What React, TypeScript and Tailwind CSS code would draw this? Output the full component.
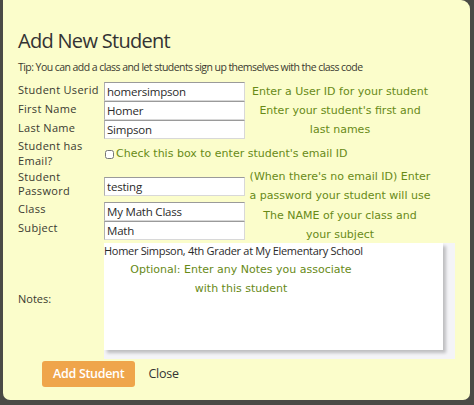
import { useState } from 'react';

const labelCls =
  "font-['Open_Sans',sans-serif] text-[11px] tracking-[0.3px] text-[#3a3a30] leading-[14px]";
const hintCls =
  "font-['DejaVu_Sans',sans-serif] text-[11px] text-[#688a17] leading-[19px] text-center";
const inputCls =
  "block w-[141px] h-[19px] bg-white border border-t-[#9a9a9a] border-l-[#b0b0b0] border-r-[#d8d8d8] border-b-[#d8d8d8] px-[2px] font-['Open_Sans',sans-serif] text-[11.5px] tracking-[-0.2px] text-[#2a2a2a] outline-none";

export function AddStudentDialog() {
  const [userid, setUserid] = useState('homersimpson');
  const [first, setFirst] = useState('Homer');
  const [last, setLast] = useState('Simpson');
  const [hasEmail, setHasEmail] = useState(false);
  const [password, setPassword] = useState('testing');
  const [klass, setKlass] = useState('My Math Class');
  const [subject, setSubject] = useState('Math');

  return (
    <div className="w-[474px] h-[405px] bg-[#4a4a45] overflow-hidden">
      <div className="ml-[3px] w-[467px] h-[400px] bg-[#fbfdcb] rounded-tr-[9px] rounded-br-[7px] rounded-bl-[7px] pl-[15px] pt-[27px]">
        <h1 className="font-['Open_Sans',sans-serif] text-[20px] leading-[28px] tracking-[-0.7px] text-[#333]">
          Add New Student
        </h1>
        <p className="mt-[4px] font-['Open_Sans',sans-serif] text-[10.5px] tracking-[-0.55px] leading-[16px] text-[#3a3a30]">
          Tip: You can add a class and let students sign up themselves with the class code
        </p>

        <div className="mt-[7px] grid grid-cols-[86px_144px_184px] grid-rows-[19px_19px_19px_33px_30px_19px_19px]">
          {/* userid */}
          <div className={`${labelCls} pt-[1px]`}>Student Userid</div>
          <input className={inputCls} value={userid} onChange={(e) => setUserid(e.target.value)} />
          <div className={hintCls}>Enter a User ID for your student</div>

          {/* names */}
          <div className={`${labelCls} pt-[1px]`}>First Name</div>
          <input className={inputCls} value={first} onChange={(e) => setFirst(e.target.value)} />
          <div className={`${hintCls} row-span-2`}>
            Enter your student's first and
            <br />
            last names
          </div>
          <div className={`${labelCls} pt-[1px]`}>Last Name</div>
          <input className={inputCls} value={last} onChange={(e) => setLast(e.target.value)} />

          {/* email */}
          <div className={`${labelCls} leading-[15px] -mt-[1px]`}>
            Student has
            <br />
            Email?
          </div>
          <label className="col-span-2 flex items-center gap-[2px] pb-[4px]">
            <input
              type="checkbox"
              checked={hasEmail}
              onChange={(e) => setHasEmail(e.target.checked)}
              className="w-[9px] h-[9px] m-0 ml-[1px] mt-[2px]"
            />
            <span className={`${hintCls} text-left`}>
              Check this box to enter student's email ID
            </span>
          </label>

          {/* password */}
          <div className={`${labelCls} -mt-[2px]`}>
            Student
            <br />
            Password
          </div>
          <div className="pt-[5px]">
            <input className={inputCls} value={password} onChange={(e) => setPassword(e.target.value)} />
          </div>
          <div className={`${hintCls} -mt-[5px]`}>
            (When there's no email ID) Enter
            <br />a password your student will use
          </div>

          {/* class / subject */}
          <div className={labelCls}>Class</div>
          <input className={inputCls} value={klass} onChange={(e) => setKlass(e.target.value)} />
          <div className={`${hintCls} row-span-2 pt-[4px]`}>
            The NAME of your class and
            <br />
            your subject
          </div>
          <div className={labelCls}>Subject</div>
          <input className={inputCls} value={subject} onChange={(e) => setSubject(e.target.value)} />
        </div>

        {/* notes */}
        <div className="mt-[3px] flex">
          <div className={`${labelCls} w-[86px] pt-[49px] tracking-[0px]`}>Notes:</div>
          <div className="w-[351px] h-[116px] bg-[#f4f4f7]">
            <div className="w-[339px] h-[107px] bg-white shadow-[3px_3px_3px_rgba(0,0,0,0.22)]">
              <div className="font-['Open_Sans',sans-serif] text-[11px] tracking-[-0.3px] leading-[16px] text-[#2a2a2a]">
                Homer Simpson, 4th Grader at My Elementary School
              </div>
              <div className={`${hintCls} w-[274px] mt-[1px] leading-[18px]`}>
                Optional: Enter any Notes you associate
                <br />
                with this student
              </div>
            </div>
          </div>
        </div>

        <div className="mt-[2px] ml-[24px] flex items-center gap-[13px]">
          <button className="h-[26px] px-[11px] rounded-[3px] bg-[#efa54b] text-white font-['Open_Sans',sans-serif] text-[12.5px] font-semibold tracking-[-0.3px]">
            Add Student
          </button>
          <button className="font-['Open_Sans',sans-serif] text-[12.5px] tracking-[-0.2px] text-[#333]">
            Close
          </button>
        </div>
      </div>
    </div>
  );
}

export default function App() {
  return <AddStudentDialog />;
}
